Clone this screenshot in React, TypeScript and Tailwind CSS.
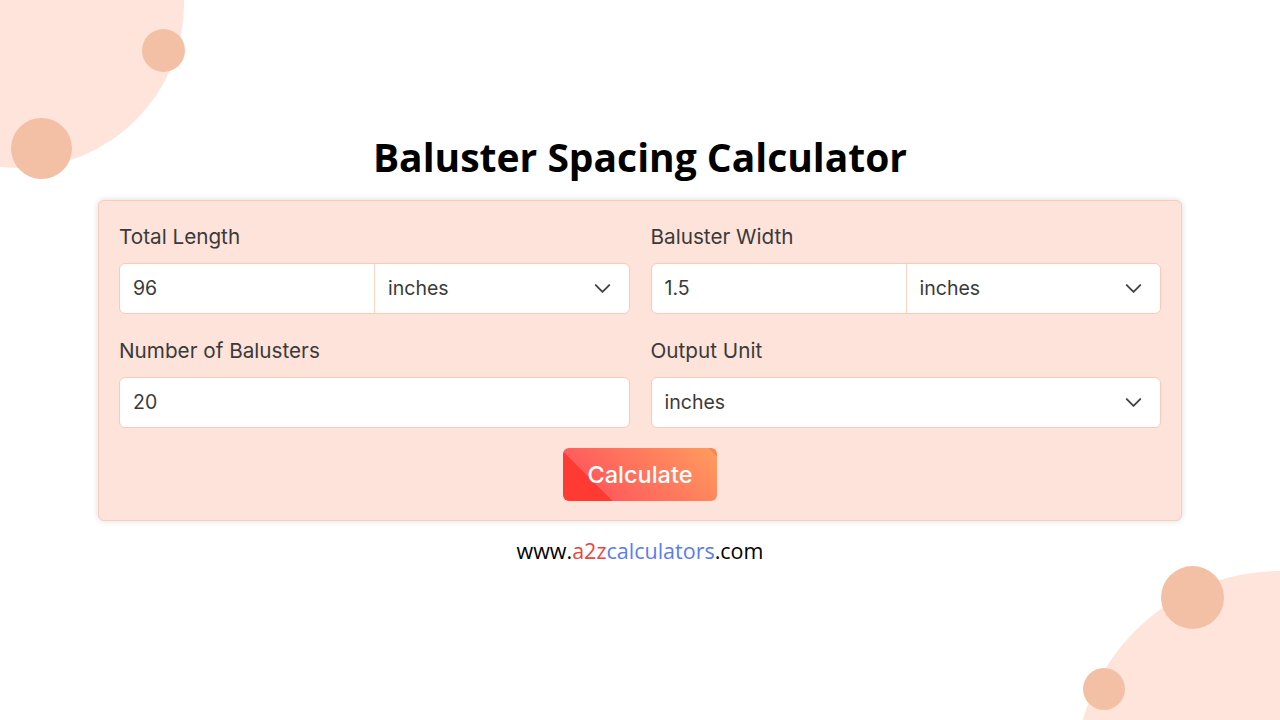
import { ChevronDown } from 'lucide-react';

const UnitSelect = ({ value }: { value: string }) => (
  <div className="flex-1 min-w-0 flex items-center justify-between pl-[13px] pr-[13px] text-[19.5px] text-[#3a3a3a]">
    <span>{value}</span>
    <ChevronDown className="w-[27px] h-[27px] text-[#444]" strokeWidth={1.7} />
  </div>
);

const Field = ({ label, value, unit, select }: { label: string; value?: string; unit?: string; select?: boolean }) => (
  <div className="flex flex-col">
    <label className="text-[20.7px] leading-[24px] text-[#3a3a3a] mb-[14px]">{label}</label>
    <div className="flex h-[51px] bg-white border border-[#fbc9b5] rounded-[6px] overflow-hidden">
      {select ? (
        <UnitSelect value={value ?? ''} />
      ) : (
        <>
          <div className={`${unit ? 'w-[254px]' : 'flex-1'} shrink-0 flex items-center pl-[13px] text-[19.5px] text-[#3a3a3a]`}>{value}</div>
          {unit && (
            <div className="flex-1 min-w-0 flex border-l border-[#fbd3c3]">
              <UnitSelect value={unit} />
            </div>
          )}
        </>
      )}
    </div>
  </div>
);

export default function App() {
  return (
    <div className="relative w-full h-[720px] overflow-hidden bg-white" style={{ fontFamily: 'Inter, "Noto Sans", sans-serif' }}>
      {/* background blobs */}
      <div className="absolute left-[-144px] top-[-160px] w-[328px] h-[328px] rounded-full bg-[#fee4da]" />
      <div className="absolute left-[142px] top-[29px] w-[43px] h-[43px] rounded-full bg-[#f4c0a5]" />
      <div className="absolute left-[11px] top-[118px] w-[61px] h-[61px] rounded-full bg-[#f4c0a5]" />
      <div className="absolute left-[1075px] top-[571px] w-[410px] h-[410px] rounded-full bg-[#fee4da]" />
      <div className="absolute left-[1161px] top-[566px] w-[63px] h-[63px] rounded-full bg-[#f4c0a5]" />
      <div className="absolute left-[1083px] top-[668px] w-[42px] h-[42px] rounded-full bg-[#f4c0a5]" />

      <div className="relative flex flex-col items-center pt-[133px]">
        <h1
          className="text-[39px] leading-[48px] font-bold text-black"
          style={{ fontFamily: '"Open Sans", "Noto Sans", sans-serif' }}
        >
          Baluster Spacing Calculator
        </h1>

        <div className="mt-[19px] w-[1084px] bg-[#fee3db] border border-[#f9cdbd] rounded-[6px] shadow-[0_0_6px_rgba(0,0,0,0.14)] px-[20px] pt-[24px] pb-[19px]">
          <div className="grid grid-cols-2 gap-x-[21px] gap-y-[25px]">
            <Field label="Total Length" value="96" unit="inches" />
            <Field label="Baluster Width" value="1.5" unit="inches" />
            <Field label="Number of Balusters" value="20" />
            <Field label="Output Unit" value="inches" select />
          </div>
          <div className="flex justify-center mt-[20px]">
            <button className="w-[154px] h-[53px] rounded-[6px] text-white text-[23.5px] font-medium bg-[linear-gradient(45deg,#ff3a33_0%,#ff3a33_24%,#ff5c5c_24%,#ff9a5e_96%,#ff8448_96%)]">
              Calculate
            </button>
          </div>
        </div>

        <p className="mt-[15px] text-[21.5px] leading-[30px] text-black" style={{ fontFamily: '"Open Sans", sans-serif' }}>
          www.<span className="text-[#f0443a]">a2z</span><span className="text-[#5a7cf2]">calculators</span>.com
        </p>
      </div>
    </div>
  );
}
